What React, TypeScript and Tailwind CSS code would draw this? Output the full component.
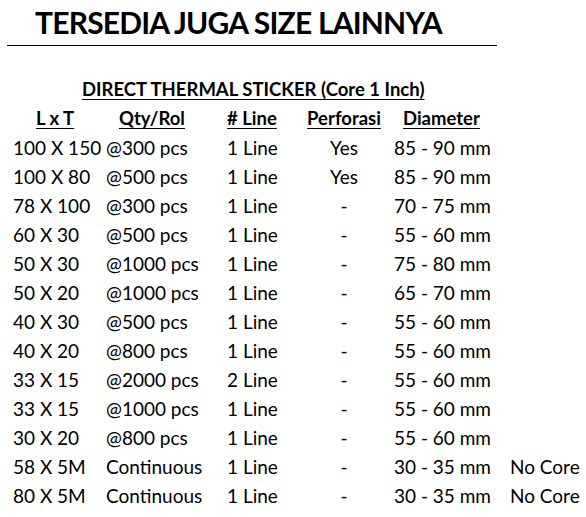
import { FunctionComponent } from "react";

type Row = {
  size: string;
  qty: string;
  line: string;
  perf: string;
  diameter: string;
  note?: string;
};

const rows: Row[] = [
  { size: "100 X 150", qty: "@300 pcs", line: "1 Line", perf: "Yes", diameter: "85 - 90 mm" },
  { size: "100 X 80", qty: "@500 pcs", line: "1 Line", perf: "Yes", diameter: "85 - 90 mm" },
  { size: "78 X 100", qty: "@300 pcs", line: "1 Line", perf: "-", diameter: "70 - 75 mm" },
  { size: "60 X 30", qty: "@500 pcs", line: "1 Line", perf: "-", diameter: "55 - 60 mm" },
  { size: "50 X 30", qty: "@1000 pcs", line: "1 Line", perf: "-", diameter: "75 - 80 mm" },
  { size: "50 X 20", qty: "@1000 pcs", line: "1 Line", perf: "-", diameter: "65 - 70 mm" },
  { size: "40 X 30", qty: "@500 pcs", line: "1 Line", perf: "-", diameter: "55 - 60 mm" },
  { size: "40 X 20", qty: "@800 pcs", line: "1 Line", perf: "-", diameter: "55 - 60 mm" },
  { size: "33 X 15", qty: "@2000 pcs", line: "2 Line", perf: "-", diameter: "55 - 60 mm" },
  { size: "33 X 15", qty: "@1000 pcs", line: "1 Line", perf: "-", diameter: "55 - 60 mm" },
  { size: "30 X 20", qty: "@800 pcs", line: "1 Line", perf: "-", diameter: "55 - 60 mm" },
  { size: "58 X 5M", qty: "Continuous", line: "1 Line", perf: "-", diameter: "30 - 35 mm", note: "No Core" },
  { size: "80 X 5M", qty: "Continuous", line: "1 Line", perf: "-", diameter: "30 - 35 mm", note: "No Core" },
];

const cols = "grid grid-cols-[93px_121px_79px_76px_128px_76px]";

const App: FunctionComponent = () => {
  return (
    <div className="w-[586px] h-[517px] overflow-hidden bg-white text-black font-['Lato','Noto_Sans',sans-serif]">
      <div className="w-[490px] ml-[7px] border-b border-black pt-[4px] pb-[5px] pl-[28px]">
        <h1 className="text-[30px] leading-[36px] font-bold tracking-[-0.8px]">
          TERSEDIA JUGA SIZE LAINNYA
        </h1>
      </div>

      <div className="mt-[29px] pl-[82px] text-[18.5px] leading-[29px] font-bold">
        <span className="underline underline-offset-[3px]">DIRECT THERMAL STICKER (Core 1 Inch)</span>
      </div>

      <div className={`${cols} ml-[13px] text-[18.5px] leading-[29px] font-bold`}>
        <span className="text-center pr-[9px] underline underline-offset-[3px]">L x T</span>
        <span className="pl-[13px] underline underline-offset-[3px]">Qty/Rol</span>
        <span className="underline underline-offset-[3px]">
          # Line
        </span>
        <span className="text-center underline underline-offset-[3px]">Perforasi</span>
        <span className="pl-[21px] underline underline-offset-[3px]">Diameter</span>
        <span />
      </div>

      <div className="ml-[13px] text-[19px] leading-[29px]">
        {rows.map((r, i) => (
          <div key={i} className={cols}>
            <span className="whitespace-nowrap">{r.size}</span>
            <span className="whitespace-nowrap">{r.qty}</span>
            <span className="whitespace-nowrap">{r.line}</span>
            <span className="text-center">{r.perf}</span>
            <span className="pl-[12px] whitespace-nowrap">{r.diameter}</span>
            <span className="whitespace-nowrap">{r.note}</span>
          </div>
        ))}
      </div>
    </div>
  );
};

export default App;
